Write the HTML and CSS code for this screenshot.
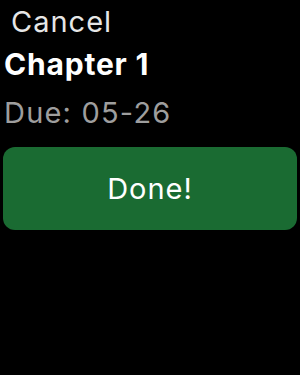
FILE: index.html
```html
<!DOCTYPE html>
<html>
<head>
<meta charset="utf-8">
<link rel="stylesheet" href="styles.css">
</head>
<body>
<div class="screen">
  <div class="cancel">Cancel</div>
  <div class="title">Chapter 1</div>
  <div class="due">Due: 05-26</div>
  <button class="done">Done!</button>
</div>
</body>
</html>
```
FILE: styles.css
```css
html, body {
  margin: 0;
  padding: 0;
  background: #000;
  width: 300px;
  height: 375px;
  overflow: hidden;
}
.screen {
  display: flex;
  flex-direction: column;
  padding: 0 3px;
  font-family: Inter, "Liberation Sans", sans-serif;
}
.cancel {
  color: #e6e6e6;
  font-size: 29px;
  letter-spacing: 1px;
  line-height: 36px;
  margin-top: 4px;
  padding-left: 8px;
}
.title {
  color: #fff;
  font-size: 30px;
  font-weight: 700;
  letter-spacing: 0.8px;
  line-height: 36px;
  margin-top: 6px;
  padding-left: 1px;
}
.due {
  color: #9e9e9e;
  font-size: 29px;
  letter-spacing: 1.2px;
  line-height: 36px;
  margin-top: 13px;
  padding-left: 1px;
}
.done {
  margin-top: 16px;
  height: 83px;
  border: none;
  border-radius: 12px;
  background: #1a6b32;
  color: #fff;
  font-family: Inter, "Liberation Sans", sans-serif;
  font-size: 29px;
  letter-spacing: 1px;
  padding: 0;
}
```
